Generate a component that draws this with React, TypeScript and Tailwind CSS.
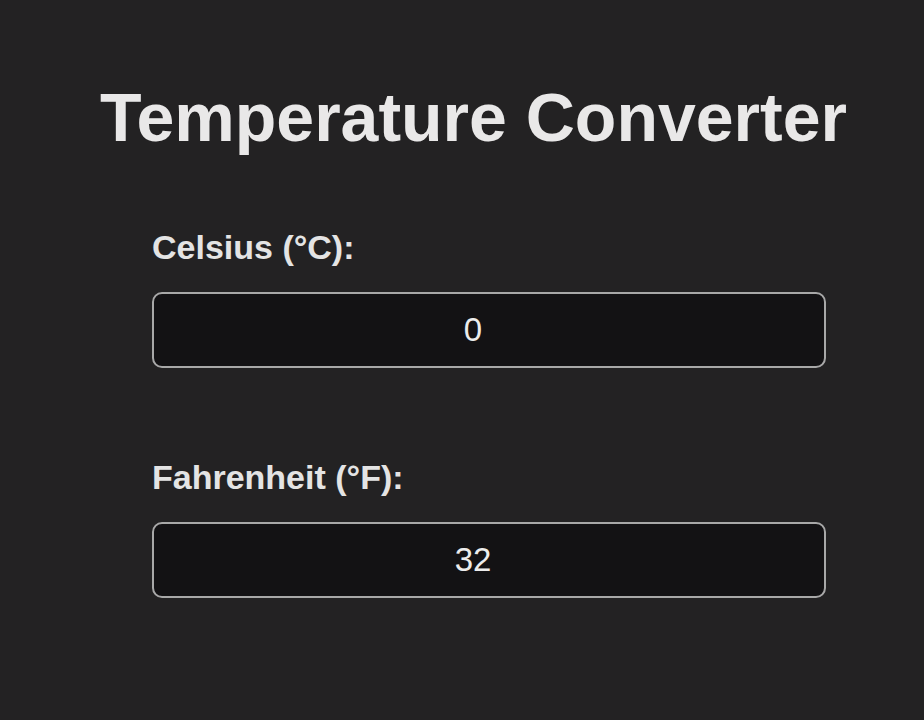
import React, { useState } from 'react';

export default function App() {
  const [celsius, setCelsius] = useState('0');
  const [fahrenheit, setFahrenheit] = useState('32');

  const onCelsius = (v: string) => {
    setCelsius(v);
    const n = parseFloat(v);
    setFahrenheit(isNaN(n) ? '' : String(Math.round(((n * 9) / 5 + 32) * 100) / 100));
  };

  const onFahrenheit = (v: string) => {
    setFahrenheit(v);
    const n = parseFloat(v);
    setCelsius(isNaN(n) ? '' : String(Math.round((((n - 32) * 5) / 9) * 100) / 100));
  };

  return (
    <div className="min-h-[720px] w-full bg-[#232223] font-['Liberation_Sans',Arial,sans-serif] text-[#e8e8e8]">
      <div className="pt-[78px]">
        <h1 className="pl-[100px] text-[68px] font-bold leading-[78px] text-[#e9e8e8] whitespace-nowrap">
          Temperature Converter
        </h1>
        <div className="ml-[152px] mt-[72px] flex w-[674px] flex-col">
          <label className="text-[34px] font-bold leading-[39px] text-[#e4e4e4]">Celsius (°C):</label>
          <input
            type="number"
            value={celsius}
            onChange={(e) => onCelsius(e.target.value)}
            className="mt-[25px] h-[76px] w-full appearance-none rounded-[10px] border-2 border-[#a8a8a8] bg-[#131214] pl-[10px] pr-[42px] text-center text-[33px] text-[#ececec] outline-none [&::-webkit-inner-spin-button]:appearance-none"
          />
          <label className="mt-[90px] text-[34px] font-bold leading-[39px] text-[#e4e4e4]">Fahrenheit (°F):</label>
          <input
            type="number"
            value={fahrenheit}
            onChange={(e) => onFahrenheit(e.target.value)}
            className="mt-[25px] h-[76px] w-full appearance-none rounded-[10px] border-2 border-[#a8a8a8] bg-[#131214] pl-[10px] pr-[42px] text-center text-[33px] text-[#ececec] outline-none [&::-webkit-inner-spin-button]:appearance-none"
          />
        </div>
      </div>
    </div>
  );
}
